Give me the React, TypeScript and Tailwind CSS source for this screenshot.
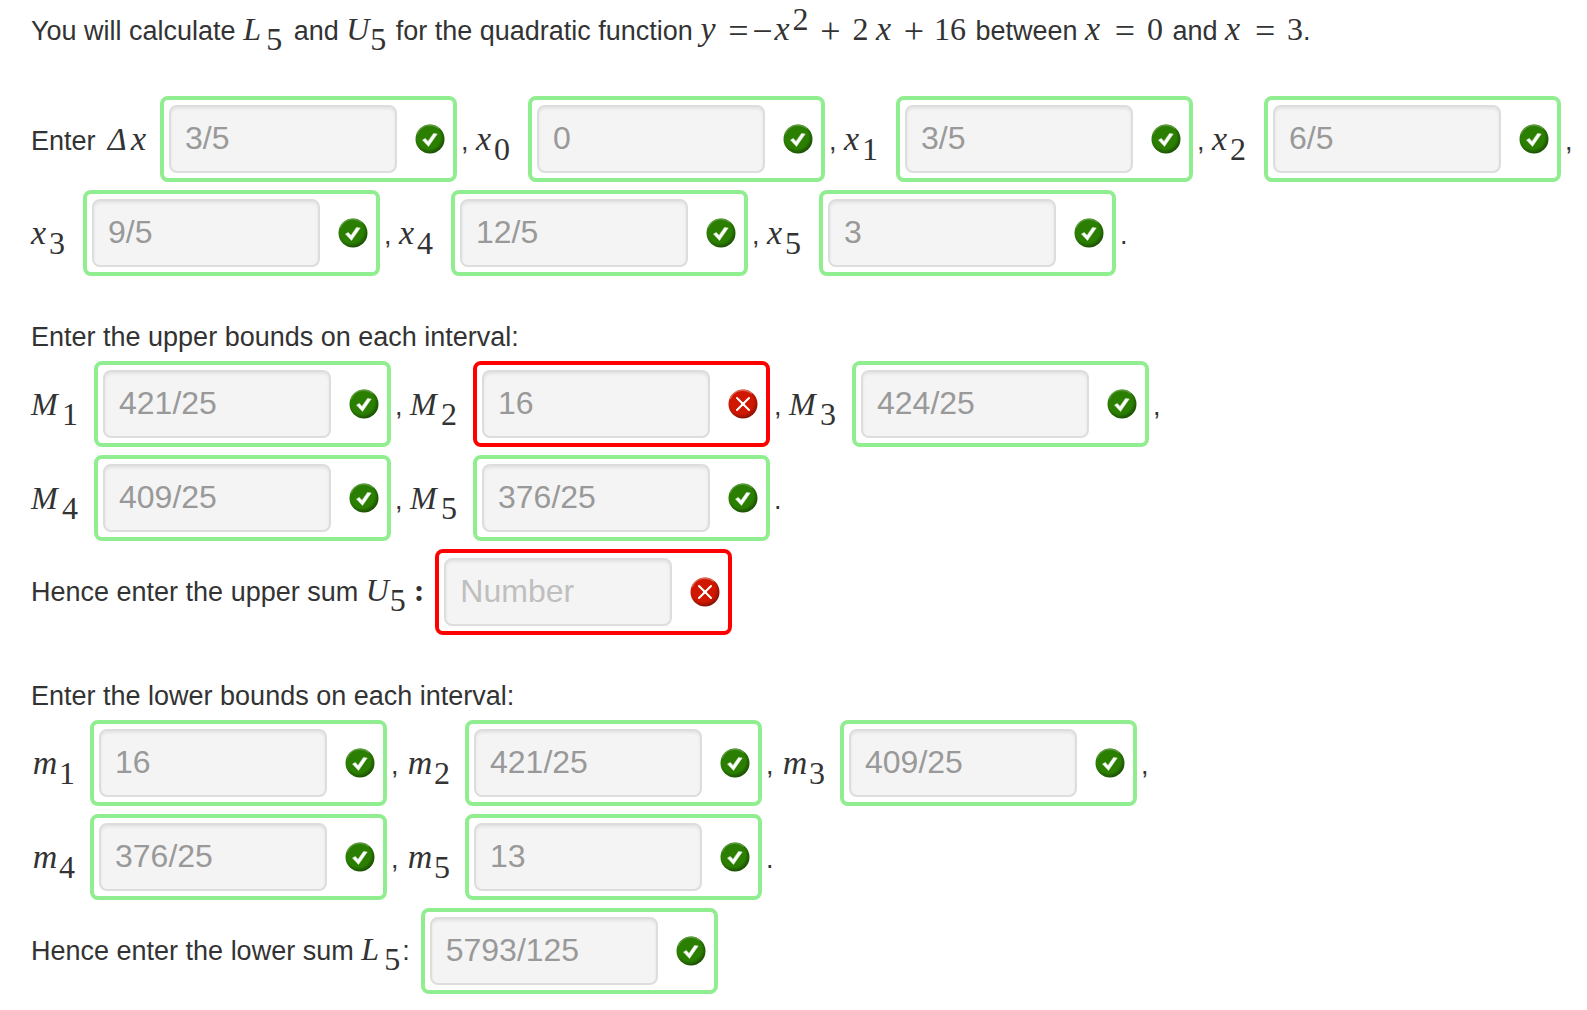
import clsx from "clsx";
import type { ReactNode } from "react";

type Answer = {
	id: string;
	letter: string;
	index: string;
	value: string;
	correct: boolean;
	after: string;
};

const points: Answer[][] = [
	[
		{ id: "x0", letter: "x", index: "0", value: "0", correct: true, after: "," },
		{ id: "x1", letter: "x", index: "1", value: "3/5", correct: true, after: "," },
		{ id: "x2", letter: "x", index: "2", value: "6/5", correct: true, after: "," },
	],
	[
		{ id: "x3", letter: "x", index: "3", value: "9/5", correct: true, after: "," },
		{ id: "x4", letter: "x", index: "4", value: "12/5", correct: true, after: "," },
		{ id: "x5", letter: "x", index: "5", value: "3", correct: true, after: "." },
	],
];

const upperBounds: Answer[][] = [
	[
		{ id: "M1", letter: "M", index: "1", value: "421/25", correct: true, after: "," },
		{ id: "M2", letter: "M", index: "2", value: "16", correct: false, after: "," },
		{ id: "M3", letter: "M", index: "3", value: "424/25", correct: true, after: "," },
	],
	[
		{ id: "M4", letter: "M", index: "4", value: "409/25", correct: true, after: "," },
		{ id: "M5", letter: "M", index: "5", value: "376/25", correct: true, after: "." },
	],
];

const lowerBounds: Answer[][] = [
	[
		{ id: "m1", letter: "m", index: "1", value: "16", correct: true, after: "," },
		{ id: "m2", letter: "m", index: "2", value: "421/25", correct: true, after: "," },
		{ id: "m3", letter: "m", index: "3", value: "409/25", correct: true, after: "," },
	],
	[
		{ id: "m4", letter: "m", index: "4", value: "376/25", correct: true, after: "," },
		{ id: "m5", letter: "m", index: "5", value: "13", correct: true, after: "." },
	],
];

const LETTER_STYLES: Record<string, string> = {
	x: "w-[18px] text-[34px]",
	y: "w-5 text-[34px]",
	m: "w-7 text-center text-[34px]",
	M: "w-[31px] text-[32px]",
	L: "w-[23px] text-[32px]",
	U: "w-6 text-[32px]",
	Δ: "w-7 text-center text-[32px]",
};

const LABEL_GAPS: Record<string, string> = {
	x: "mr-[18px]",
	M: "mr-4",
	m: "mr-[15px]",
};

function Letter({ children }: { children: string }) {
	return (
		<i
			className={clsx(
				"inline-block font-['Liberation_Serif',serif] leading-none",
				LETTER_STYLES[children],
			)}
		>
			{children}
		</i>
	);
}

function Num({ children }: { children: string }) {
	return (
		<span className="inline-block font-['Liberation_Serif',serif] text-[32px] leading-none">
			{children}
		</span>
	);
}

function Op({ children }: { children: string }) {
	return (
		<span className="inline-block w-6 text-center align-[-3px] font-['Liberation_Serif',serif] text-[36px] leading-none">
			{children}
		</span>
	);
}

function Indexed({ letter, index }: { letter: string; index: string }) {
	return (
		<span className="whitespace-nowrap">
			<Letter>{letter}</Letter>
			<sub className="static align-[-10px] font-['Liberation_Serif',serif] text-[32px] leading-[0]">
				{index}
			</sub>
		</span>
	);
}

function CorrectIcon() {
	return (
		<svg viewBox="0 0 32 32" className="size-8" role="img" aria-label="Correct">
			<defs>
				<radialGradient id="green" cx="0.44" cy="0.42" r="0.58">
					<stop offset="0.72" stopColor="#2b7f00" />
					<stop offset="1" stopColor="#1b4f04" />
				</radialGradient>
			</defs>
			<circle cx="16" cy="16" r="14.500" fill="url(#green)" />
			<path
				d="M3 11A14 14 0 0 1 25 5.500"
				fill="none"
				stroke="#6fa556"
				strokeWidth="1.500"
				opacity="0.700"
			/>
			<path
				d="M8.500 17l2.800-1.600 2.700 3 5.500-7.900 3.700.5-8.700 12.500z"
				fill="#fff"
				stroke="#d5e6cc"
				strokeWidth="0.600"
			/>
		</svg>
	);
}

function WrongIcon() {
	return (
		<svg viewBox="0 0 32 32" className="size-8" role="img" aria-label="Incorrect">
			<defs>
				<radialGradient id="red" cx="0.44" cy="0.42" r="0.58">
					<stop offset="0.72" stopColor="#d01700" />
					<stop offset="1" stopColor="#8a1206" />
				</radialGradient>
			</defs>
			<circle cx="16" cy="16" r="14.500" fill="url(#red)" />
			<path
				d="M3 11A14 14 0 0 1 25 5.500"
				fill="none"
				stroke="#e58878"
				strokeWidth="1.500"
				opacity="0.700"
			/>
			<path
				d="M10 10l12 12M22 10l-12 12"
				stroke="#fff"
				strokeWidth="2"
				strokeLinecap="round"
			/>
			<rect x="14" y="14" width="4" height="4" fill="#fff" />
		</svg>
	);
}

function AnswerBox({
	id,
	value,
	correct,
}: {
	id: string;
	value: string;
	correct: boolean;
}) {
	return (
		<span
			className={clsx(
				"flex shrink-0 items-center rounded-lg border-4 p-[5px]",
				correct ? "border-[#90ee90]" : "border-[#ff0000]",
			)}
		>
			<input
				id={id}
				type="text"
				disabled
				defaultValue={value}
				placeholder="Number"
				className="h-[68px] w-[228px] rounded-lg border-2 border-[#dddddd] bg-[#f4f4f4] px-3.5 pb-0.5 text-[32px] text-[#999999] shadow-[inset_0_2px_3px_rgba(0,0,0,0.07)] placeholder:text-[#bfbfbf]"
			/>
			<span className="ml-[17px] mr-0.5">
				{correct ? <CorrectIcon /> : <WrongIcon />}
			</span>
		</span>
	);
}

function AnswerItem({ answer }: { answer: Answer }) {
	return (
		<div className="flex items-center">
			<label
				htmlFor={answer.id}
				className={clsx("pt-1", LABEL_GAPS[answer.letter])}
			>
				<Indexed letter={answer.letter} index={answer.index} />
			</label>
			<AnswerBox id={answer.id} value={answer.value} correct={answer.correct} />
			<span className="ml-1 w-[15px] pt-1">{answer.after}</span>
		</div>
	);
}

function AnswerRow({
	answers,
	children,
}: {
	answers: Answer[];
	children?: ReactNode;
}) {
	return (
		<div className="flex flex-wrap items-center gap-y-2">
			{children}
			{answers.map((answer) => (
				<AnswerItem key={answer.id} answer={answer} />
			))}
		</div>
	);
}

export default function App() {
	return (
		<main className="flex flex-col gap-[41px] bg-white pt-[11px] pb-4 pl-[31px] font-['Liberation_Sans',Arial,sans-serif] text-[27px] text-[#333333] leading-[40px]">
			<p className="mb-1">
				You will calculate <Indexed letter="L" index="5" />
				<span className="ml-1"> and </span>
				<Indexed letter="U" index="5" />
				<span className="ml-0.5"> for the quadratic function </span>
				<span className="whitespace-nowrap">
					<Letter>y</Letter>
					<span className="ml-1.5">
						<Op>=</Op>
						<Op>−</Op>
					</span>
					<Letter>x</Letter>
					<sup className="static align-[10px] font-['Liberation_Serif',serif] text-[32px] leading-[0]">
						2
					</sup>
					<span className="mx-2.5">
						<Op>+</Op>
					</span>
					<Num>2</Num> <Letter>x</Letter>
					<span className="mx-2">
						<Op>+</Op>
					</span>
					<Num>16</Num>
				</span>
				<span className="ml-0.5"> between </span>
				<span className="whitespace-nowrap">
					<Letter>x</Letter>
					<span className="mx-2.5">
						<Op>=</Op>
					</span>
					<Num>0</Num>
				</span>
				<span className="ml-0.5"> and </span>
				<span className="whitespace-nowrap">
					<Letter>x</Letter>
					<span className="mx-2.5">
						<Op>=</Op>
					</span>
					<Num>3</Num>.
				</span>
			</p>

			<section className="flex flex-col gap-2">
				<AnswerRow answers={points[0]}>
					<div className="flex items-center">
						<label htmlFor="dx" className="mr-[11px] pt-1 whitespace-nowrap">
							Enter <Letter>Δ</Letter>
							<Letter>x</Letter>
						</label>
						<AnswerBox id="dx" value="3/5" correct />
						<span className="ml-1 w-[15px] pt-1">,</span>
					</div>
				</AnswerRow>
				<AnswerRow answers={points[1]} />
			</section>

			{/* Upper sum */}
			<section>
				<h2 className="mb-1">Enter the upper bounds on each interval:</h2>
				<div className="flex flex-col gap-2">
					{upperBounds.map((row) => (
						<AnswerRow key={row[0].id} answers={row} />
					))}
					<div className="flex items-center">
						<label htmlFor="U5" className="mr-[11px]">
							Hence enter the upper sum <Indexed letter="U" index="5" />
							<b className="ml-2 font-['Liberation_Serif',serif] text-[32px] leading-none">
								:
							</b>
						</label>
						<AnswerBox id="U5" value="" correct={false} />
					</div>
				</div>
			</section>

			{/* Lower sum */}
			<section>
				<h2 className="mb-1">Enter the lower bounds on each interval:</h2>
				<div className="flex flex-col gap-2">
					{lowerBounds.map((row) => (
						<AnswerRow key={row[0].id} answers={row} />
					))}
					<div className="flex items-center">
						<label htmlFor="L5" className="mr-[11px]">
							Hence enter the lower sum <Indexed letter="L" index="5" />
							<span className="ml-0.5">:</span>
						</label>
						<AnswerBox id="L5" value="5793/125" correct />
					</div>
				</div>
			</section>
		</main>
	);
}
